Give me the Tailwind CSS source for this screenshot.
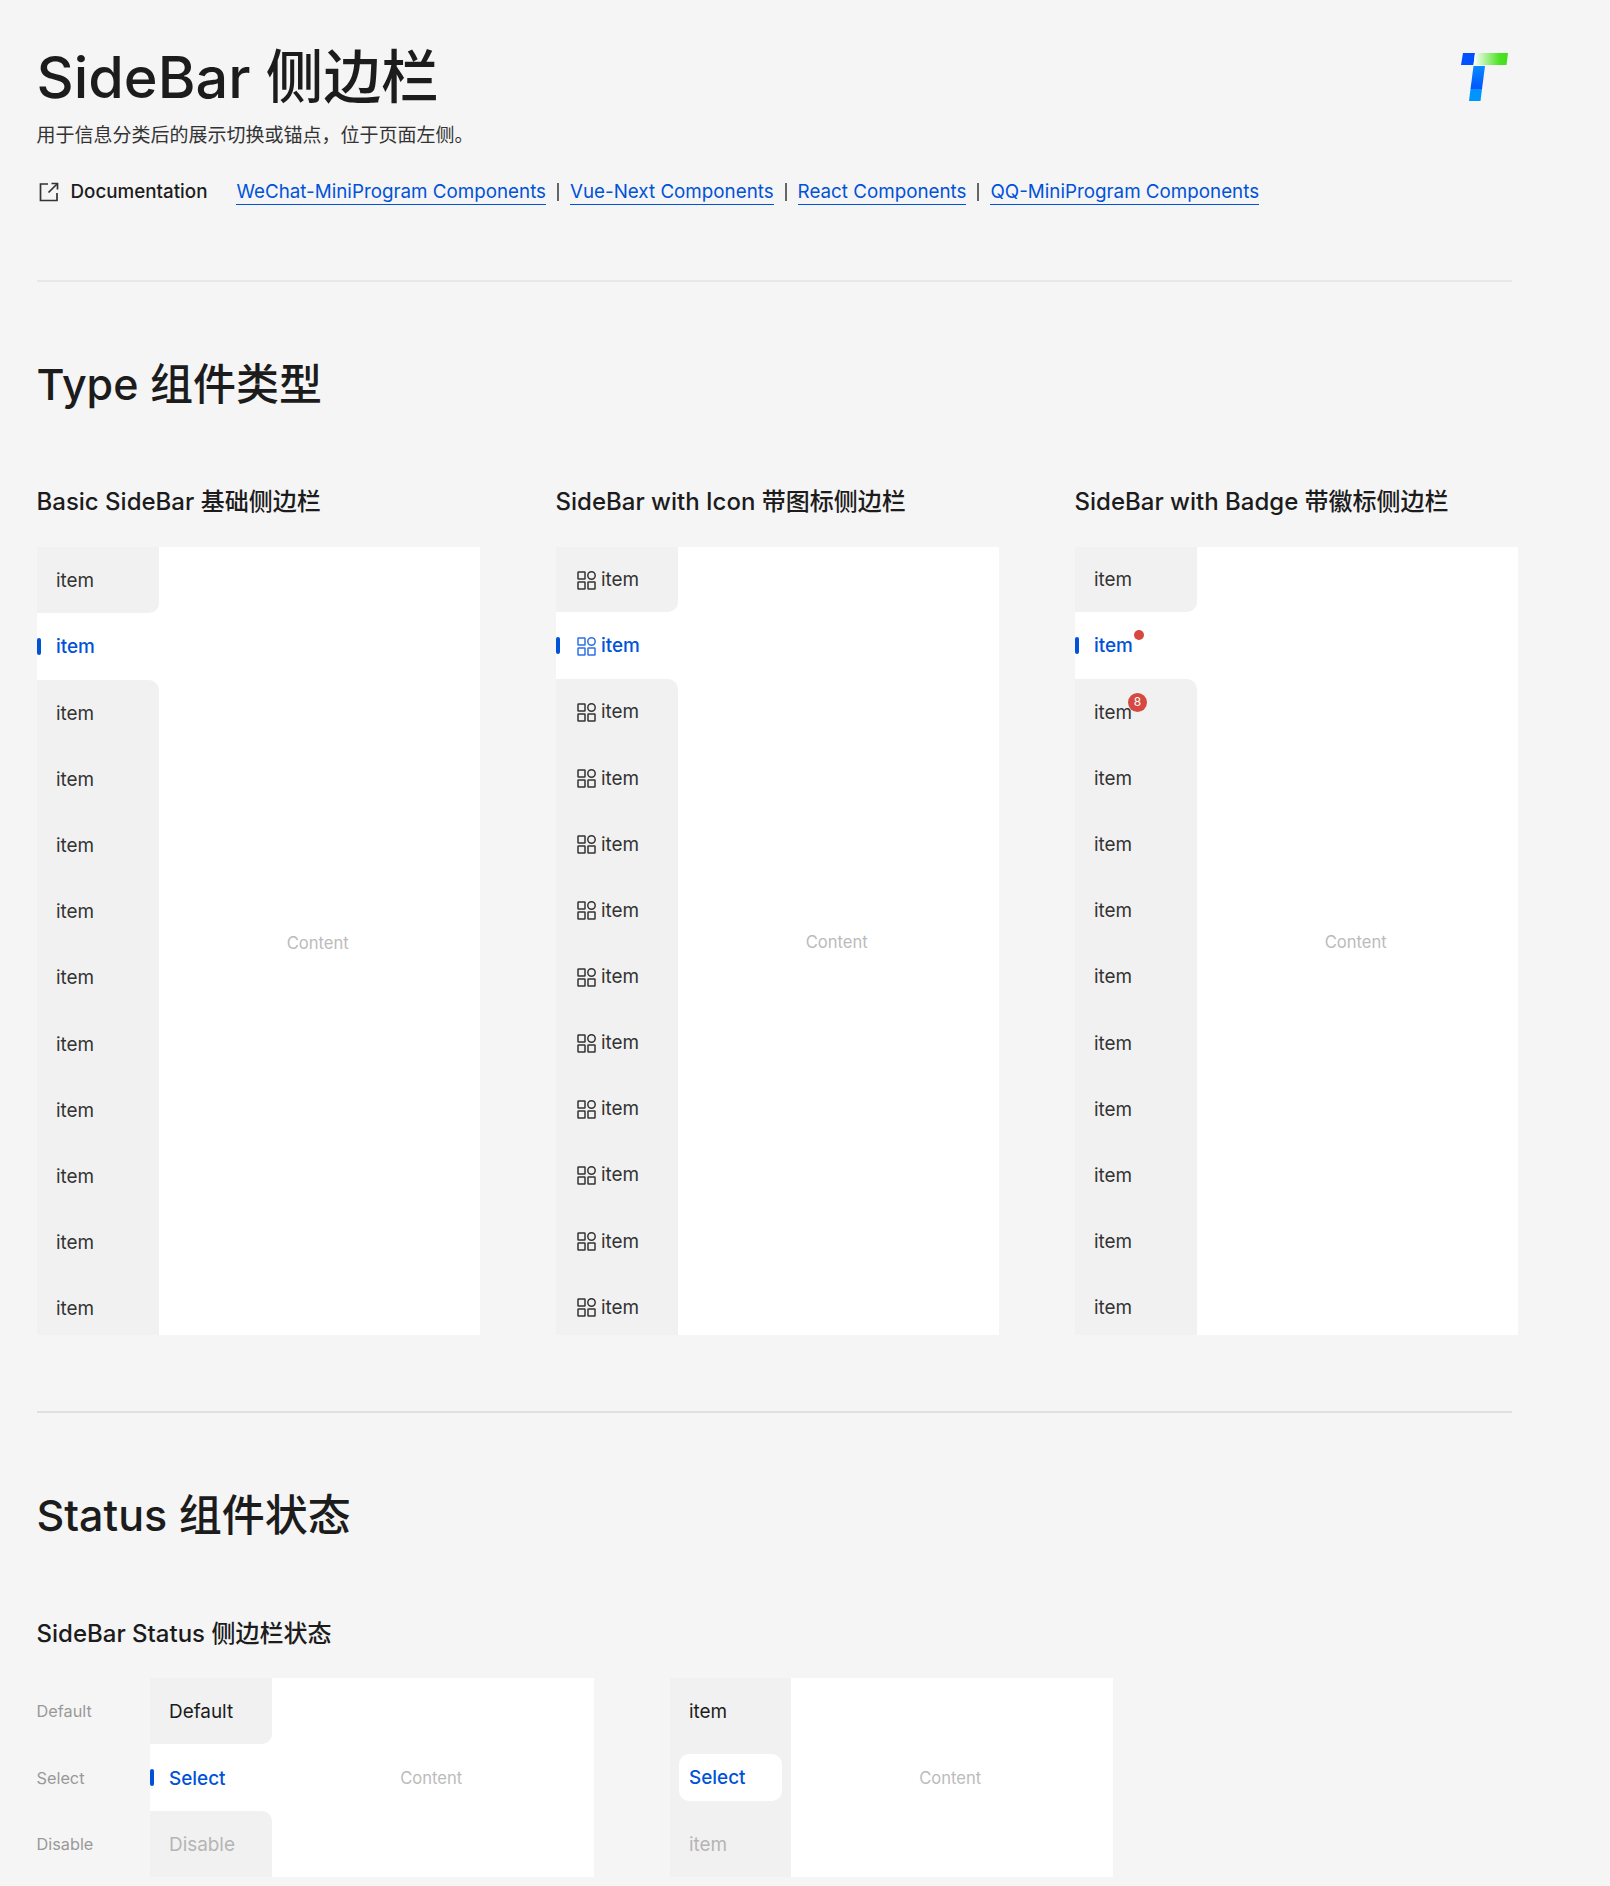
<!doctype html>
<html lang="zh-CN">
<head>
<meta charset="utf-8">
<title>SideBar</title>
<script src="https://cdn.jsdelivr.net/npm/@tailwindcss/browser@4"></script>
</head>
<body class="m-0">
<div class="w-[1610px] h-[1886px] overflow-hidden bg-[#f5f5f5] pl-[36.500px] font-['Inter','Noto_Sans_CJK_SC',sans-serif] text-[#1c1c1c]">

  <header class="w-[1475px] pt-[48px]">
    <div class="flex items-start justify-between">
      <h1 class="text-[57.6px] leading-[58px] font-medium">SideBar 侧边栏</h1>
      <svg class="mt-[5px] mr-[3.500px]" width="47" height="48" viewBox="0 0 47 48">
        <defs>
          <linearGradient id="lg" x1="0" x2="1" y1="0" y2="0"><stop offset="0" stop-color="#ffffff"/><stop offset="0.75" stop-color="#4ee225"/><stop offset="1" stop-color="#44dd18"/></linearGradient>
          <linearGradient id="lb" x1="0" x2="0" y1="0" y2="1"><stop offset="0" stop-color="#0a8cff"/><stop offset="1" stop-color="#0052ff"/></linearGradient>
        </defs>
        <path d="M2 0H14L12.5 12H0Z" fill="#0052ff"/>
        <path d="M14 0H47L45.500 12H12.500Z" fill="url(#lg)"/>
        <path d="M12.500 13H24L21 36H9.500Z" fill="url(#lb)"/>
        <path d="M9.500 36H21L19.500 48H8Z" fill="#0094ff"/>
      </svg>
    </div>
    <p class="mt-[17px] text-[19px] leading-[26px] text-[#333]">用于信息分类后的展示切换或锚点，位于页面左侧。</p>
    <div class="mt-[28px] flex items-center h-[30px] text-[18.800px]">
      <svg class="ml-[2px]" width="20" height="20" viewBox="0 0 20 20" fill="none" stroke="#333" stroke-width="1.7"><path d="M9 2H1.500V18.500H18V11"/><path d="M12.500 1.500H18.500V7.500"/><path d="M18 2L9.500 10.500"/></svg>
      <span class="ml-[12px] font-medium">Documentation</span>
      <a class="ml-[29px] text-[#0052d9] border-b-[1.5px] border-[#0052d9] leading-[24px]">WeChat-MiniProgram Components</a>
      <span class="w-[2px] h-[18px] mx-[11px] bg-[#666]"></span>
      <a class="text-[#0052d9] border-b-[1.5px] border-[#0052d9] leading-[24px]">Vue-Next Components</a>
      <span class="w-[2px] h-[18px] mx-[11px] bg-[#666]"></span>
      <a class="text-[#0052d9] border-b-[1.5px] border-[#0052d9] leading-[24px]">React Components</a>
      <span class="w-[2px] h-[18px] mx-[11px] bg-[#666]"></span>
      <a class="text-[#0052d9] border-b-[1.5px] border-[#0052d9] leading-[24px]">QQ-MiniProgram Components</a>
    </div>
    <div class="mt-[73px] h-[2px] bg-[#e7e7e7]"></div>
  </header>

  <section>
    <h2 class="mt-[80px] text-[43px] leading-[44px] font-medium">Type 组件类型</h2>
    <div class="mt-[81px] flex gap-[75.500px] text-[#333]">

      <div class="w-[443.500px]">
        <h3 class="text-[24px] leading-[30px] font-medium text-[#1c1c1c]">Basic SideBar 基础侧边栏</h3>
        <div class="mt-[30px] flex h-[788px] overflow-hidden bg-white">
          <div class="w-[122px] text-[18.900px]">
            <div class="flex items-center h-[66px] pl-[19.500px] pt-[2px] bg-[#f1f1f1] rounded-br-[10px]">item</div>
            <div class="relative flex items-center h-[67px] pl-[19.500px] pt-[2px] text-[#0052d9] font-medium"><span class="absolute left-0 top-[25px] w-[4px] h-[17px] rounded-[2px] bg-[#0052d9]"></span>item</div>
            <div class="flex items-center h-[66.150px] pl-[19.500px] pt-[2px] bg-[#f1f1f1] rounded-tr-[10px]">item</div>
            <div class="flex items-center h-[66.150px] pl-[19.500px] pt-[2px] bg-[#f1f1f1]">item</div>
            <div class="flex items-center h-[66.150px] pl-[19.500px] pt-[2px] bg-[#f1f1f1]">item</div>
            <div class="flex items-center h-[66.150px] pl-[19.500px] pt-[2px] bg-[#f1f1f1]">item</div>
            <div class="flex items-center h-[66.150px] pl-[19.500px] pt-[2px] bg-[#f1f1f1]">item</div>
            <div class="flex items-center h-[66.150px] pl-[19.500px] pt-[2px] bg-[#f1f1f1]">item</div>
            <div class="flex items-center h-[66.150px] pl-[19.500px] pt-[2px] bg-[#f1f1f1]">item</div>
            <div class="flex items-center h-[66.150px] pl-[19.500px] pt-[2px] bg-[#f1f1f1]">item</div>
            <div class="flex items-center h-[66.150px] pl-[19.500px] pt-[2px] bg-[#f1f1f1]">item</div>
            <div class="flex items-center h-[66.150px] pl-[19.500px] pt-[2px] bg-[#f1f1f1]">item</div>
          </div>
          <div class="flex-1 flex items-center justify-center pr-[3px] pt-[4px] text-[16.600px] text-[#bbb]">Content</div>
        </div>
      </div>

      <div class="w-[443.500px]">
        <h3 class="text-[24px] leading-[30px] font-medium text-[#1c1c1c]">SideBar with Icon 带图标侧边栏</h3>
        <div class="mt-[30px] flex h-[788px] overflow-hidden bg-white">
          <div class="w-[122px] text-[18.900px]">
            <div class="flex items-center h-[65px] pl-[21px] pt-[1px] gap-[5.500px] bg-[#f1f1f1] rounded-br-[10px]"><svg width="19" height="19" viewBox="0 0 19 19" fill="none" stroke="currentColor" stroke-width="1.500"><rect x="1" y="1" width="7" height="7" rx=".5"/><circle cx="14.500" cy="4.500" r="3.700"/><rect x="1" y="11" width="7" height="7" rx=".5"/><rect x="11" y="11" width="7" height="7" rx=".5"/></svg>item</div>
            <div class="relative flex items-center h-[67px] pl-[21px] pt-[1px] gap-[5.500px] text-[#0052d9] font-medium"><span class="absolute left-0 top-[25px] w-[4px] h-[17px] rounded-[2px] bg-[#0052d9]"></span><svg width="19" height="19" viewBox="0 0 19 19" fill="none" stroke="#2f6fe4" stroke-width="1.500"><rect x="1" y="1" width="7" height="7" rx=".5"/><circle cx="14.500" cy="4.500" r="3.700"/><rect x="1" y="11" width="7" height="7" rx=".5"/><rect x="11" y="11" width="7" height="7" rx=".5"/></svg>item</div>
            <div class="flex items-center h-[66.150px] pl-[21px] pt-[1px] gap-[5.500px] bg-[#f1f1f1] rounded-tr-[10px]"><svg width="19" height="19" viewBox="0 0 19 19" fill="none" stroke="currentColor" stroke-width="1.500"><rect x="1" y="1" width="7" height="7" rx=".5"/><circle cx="14.500" cy="4.500" r="3.700"/><rect x="1" y="11" width="7" height="7" rx=".5"/><rect x="11" y="11" width="7" height="7" rx=".5"/></svg>item</div>
            <div class="flex items-center h-[66.150px] pl-[21px] pt-[1px] gap-[5.500px] bg-[#f1f1f1]"><svg width="19" height="19" viewBox="0 0 19 19" fill="none" stroke="currentColor" stroke-width="1.500"><rect x="1" y="1" width="7" height="7" rx=".5"/><circle cx="14.500" cy="4.500" r="3.700"/><rect x="1" y="11" width="7" height="7" rx=".5"/><rect x="11" y="11" width="7" height="7" rx=".5"/></svg>item</div>
            <div class="flex items-center h-[66.150px] pl-[21px] pt-[1px] gap-[5.500px] bg-[#f1f1f1]"><svg width="19" height="19" viewBox="0 0 19 19" fill="none" stroke="currentColor" stroke-width="1.500"><rect x="1" y="1" width="7" height="7" rx=".5"/><circle cx="14.500" cy="4.500" r="3.700"/><rect x="1" y="11" width="7" height="7" rx=".5"/><rect x="11" y="11" width="7" height="7" rx=".5"/></svg>item</div>
            <div class="flex items-center h-[66.150px] pl-[21px] pt-[1px] gap-[5.500px] bg-[#f1f1f1]"><svg width="19" height="19" viewBox="0 0 19 19" fill="none" stroke="currentColor" stroke-width="1.500"><rect x="1" y="1" width="7" height="7" rx=".5"/><circle cx="14.500" cy="4.500" r="3.700"/><rect x="1" y="11" width="7" height="7" rx=".5"/><rect x="11" y="11" width="7" height="7" rx=".5"/></svg>item</div>
            <div class="flex items-center h-[66.150px] pl-[21px] pt-[1px] gap-[5.500px] bg-[#f1f1f1]"><svg width="19" height="19" viewBox="0 0 19 19" fill="none" stroke="currentColor" stroke-width="1.500"><rect x="1" y="1" width="7" height="7" rx=".5"/><circle cx="14.500" cy="4.500" r="3.700"/><rect x="1" y="11" width="7" height="7" rx=".5"/><rect x="11" y="11" width="7" height="7" rx=".5"/></svg>item</div>
            <div class="flex items-center h-[66.150px] pl-[21px] pt-[1px] gap-[5.500px] bg-[#f1f1f1]"><svg width="19" height="19" viewBox="0 0 19 19" fill="none" stroke="currentColor" stroke-width="1.500"><rect x="1" y="1" width="7" height="7" rx=".5"/><circle cx="14.500" cy="4.500" r="3.700"/><rect x="1" y="11" width="7" height="7" rx=".5"/><rect x="11" y="11" width="7" height="7" rx=".5"/></svg>item</div>
            <div class="flex items-center h-[66.150px] pl-[21px] pt-[1px] gap-[5.500px] bg-[#f1f1f1]"><svg width="19" height="19" viewBox="0 0 19 19" fill="none" stroke="currentColor" stroke-width="1.500"><rect x="1" y="1" width="7" height="7" rx=".5"/><circle cx="14.500" cy="4.500" r="3.700"/><rect x="1" y="11" width="7" height="7" rx=".5"/><rect x="11" y="11" width="7" height="7" rx=".5"/></svg>item</div>
            <div class="flex items-center h-[66.150px] pl-[21px] pt-[1px] gap-[5.500px] bg-[#f1f1f1]"><svg width="19" height="19" viewBox="0 0 19 19" fill="none" stroke="currentColor" stroke-width="1.500"><rect x="1" y="1" width="7" height="7" rx=".5"/><circle cx="14.500" cy="4.500" r="3.700"/><rect x="1" y="11" width="7" height="7" rx=".5"/><rect x="11" y="11" width="7" height="7" rx=".5"/></svg>item</div>
            <div class="flex items-center h-[66.150px] pl-[21px] pt-[1px] gap-[5.500px] bg-[#f1f1f1]"><svg width="19" height="19" viewBox="0 0 19 19" fill="none" stroke="currentColor" stroke-width="1.500"><rect x="1" y="1" width="7" height="7" rx=".5"/><circle cx="14.500" cy="4.500" r="3.700"/><rect x="1" y="11" width="7" height="7" rx=".5"/><rect x="11" y="11" width="7" height="7" rx=".5"/></svg>item</div>
            <div class="flex items-center h-[66.150px] pl-[21px] pt-[1px] gap-[5.500px] bg-[#f1f1f1]"><svg width="19" height="19" viewBox="0 0 19 19" fill="none" stroke="currentColor" stroke-width="1.500"><rect x="1" y="1" width="7" height="7" rx=".5"/><circle cx="14.500" cy="4.500" r="3.700"/><rect x="1" y="11" width="7" height="7" rx=".5"/><rect x="11" y="11" width="7" height="7" rx=".5"/></svg>item</div>
          </div>
          <div class="flex-1 flex items-center justify-center pr-[3px] pt-[3px] text-[16.600px] text-[#bbb]">Content</div>
        </div>
      </div>

      <div class="w-[443.500px]">
        <h3 class="text-[24px] leading-[30px] font-medium text-[#1c1c1c]">SideBar with Badge 带徽标侧边栏</h3>
        <div class="mt-[30px] flex h-[788px] overflow-hidden bg-white">
          <div class="w-[122px] text-[18.900px]">
            <div class="flex items-center h-[65px] pl-[19.500px] pt-[2px] bg-[#f1f1f1] rounded-br-[10px]">item</div>
            <div class="relative flex items-center h-[67px] pl-[19.500px] pt-[2px] text-[#0052d9] font-medium"><span class="absolute left-0 top-[25px] w-[4px] h-[17px] rounded-[2px] bg-[#0052d9]"></span><span class="relative">item<span class="absolute -right-[11px] top-[-2px] w-[9.600px] h-[9.600px] rounded-full bg-[#d54941]"></span></span></div>
            <div class="flex items-center h-[66.150px] pl-[19.500px] pt-[2px] bg-[#f1f1f1] rounded-tr-[10px]"><span class="relative">item<span class="absolute -right-[15px] top-[-6px] flex items-center justify-center w-[19.200px] h-[19.200px] rounded-full bg-[#d54941] text-white text-[12px] leading-none">8</span></span></div>
            <div class="flex items-center h-[66.150px] pl-[19.500px] pt-[2px] bg-[#f1f1f1]">item</div>
            <div class="flex items-center h-[66.150px] pl-[19.500px] pt-[2px] bg-[#f1f1f1]">item</div>
            <div class="flex items-center h-[66.150px] pl-[19.500px] pt-[2px] bg-[#f1f1f1]">item</div>
            <div class="flex items-center h-[66.150px] pl-[19.500px] pt-[2px] bg-[#f1f1f1]">item</div>
            <div class="flex items-center h-[66.150px] pl-[19.500px] pt-[2px] bg-[#f1f1f1]">item</div>
            <div class="flex items-center h-[66.150px] pl-[19.500px] pt-[2px] bg-[#f1f1f1]">item</div>
            <div class="flex items-center h-[66.150px] pl-[19.500px] pt-[2px] bg-[#f1f1f1]">item</div>
            <div class="flex items-center h-[66.150px] pl-[19.500px] pt-[2px] bg-[#f1f1f1]">item</div>
            <div class="flex items-center h-[66.150px] pl-[19.500px] pt-[2px] bg-[#f1f1f1]">item</div>
          </div>
          <div class="flex-1 flex items-center justify-center pr-[3px] pt-[3px] text-[16.600px] text-[#bbb]">Content</div>
        </div>
      </div>

    </div>
    <div class="mt-[76px] w-[1475px] h-[2px] bg-[#e0e0e0]"></div>
  </section>

  <section>
    <h2 class="mt-[80px] text-[43px] leading-[44px] font-medium">Status 组件状态</h2>
    <h3 class="mt-[82px] text-[24px] leading-[30px] font-medium">SideBar Status 侧边栏状态</h3>
    <div class="mt-[29px] flex text-[#333]">
      <div class="w-[113.500px] text-[16.300px] text-[#999]">
        <div class="flex items-center h-[66.300px] pt-[1px]">Default</div>
        <div class="flex items-center h-[66.300px] pt-[1px]">Select</div>
        <div class="flex items-center h-[66.300px]">Disable</div>
      </div>
      <div class="flex w-[443.500px] h-[199px] bg-white">
        <div class="w-[122px] text-[18.900px]">
          <div class="flex items-center h-[66.300px] pl-[19px] pt-[3px] bg-[#f1f1f1] rounded-br-[10px] text-[#1c1c1c]">Default</div>
          <div class="relative flex items-center h-[66.300px] pl-[19px] pt-[3px] text-[#0052d9] font-medium"><span class="absolute left-0 top-[25px] w-[4px] h-[17px] rounded-[2px] bg-[#0052d9]"></span>Select</div>
          <div class="flex items-center h-[66.300px] pl-[19px] pt-[3px] bg-[#f1f1f1] rounded-tr-[10px] text-[#b5b5b5]">Disable</div>
        </div>
        <div class="flex-1 flex items-center justify-center pr-[3px] pt-[2px] text-[16.600px] text-[#bbb]">Content</div>
      </div>
      <div class="ml-[76px] flex w-[443px] h-[199px] bg-white">
        <div class="w-[121.500px] bg-[#f1f1f1] text-[18.900px] px-[9.500px]">
          <div class="flex items-center h-[66.300px] pl-[10px] pt-[3px] text-[#1c1c1c]">item</div>
          <div class="flex items-center h-[47.500px] my-[9.400px] pl-[10px] pt-[2px] rounded-[10px] bg-white text-[#0052d9] font-medium">Select</div>
          <div class="flex items-center h-[66.300px] pl-[10px] pt-[3px] text-[#b5b5b5]">item</div>
        </div>
        <div class="flex-1 flex items-center justify-center pr-[3px] pt-[2px] text-[16.600px] text-[#bbb]">Content</div>
      </div>
    </div>
  </section>

</div>
</body>
</html>
